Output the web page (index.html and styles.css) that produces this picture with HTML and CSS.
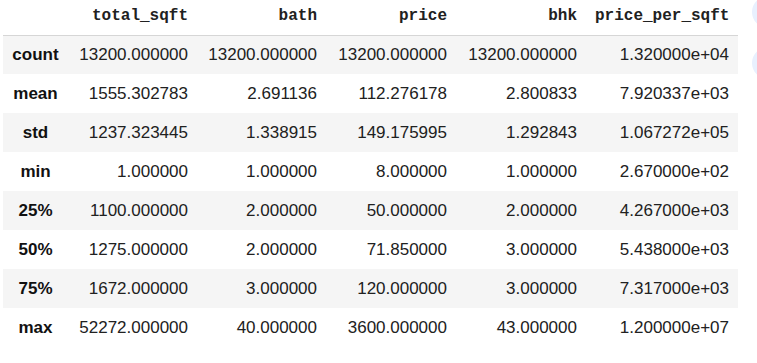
FILE: index.html
```html
<!DOCTYPE html>
<html lang="en">
<head>
    <meta charset="UTF-8">
    <title>df.describe()</title>
    <link rel="stylesheet" href="styles.css">
</head>
<body>
    <div class="output">
        <table class="dataframe">
            <colgroup>
                <col class="c-index">
                <col class="c-num">
                <col class="c-num">
                <col class="c-num2">
                <col class="c-num2">
                <col class="c-last">
            </colgroup>
            <thead>
                <tr>
                    <th></th>
                    <th>total_sqft</th>
                    <th>bath</th>
                    <th>price</th>
                    <th>bhk</th>
                    <th>price_per_sqft</th>
                </tr>
            </thead>
            <tbody>
                <tr><th>count</th><td>13200.000000</td><td>13200.000000</td><td>13200.000000</td><td>13200.000000</td><td>1.320000e+04</td></tr>
                <tr><th>mean</th><td>1555.302783</td><td>2.691136</td><td>112.276178</td><td>2.800833</td><td>7.920337e+03</td></tr>
                <tr><th>std</th><td>1237.323445</td><td>1.338915</td><td>149.175995</td><td>1.292843</td><td>1.067272e+05</td></tr>
                <tr><th>min</th><td>1.000000</td><td>1.000000</td><td>8.000000</td><td>1.000000</td><td>2.670000e+02</td></tr>
                <tr><th>25%</th><td>1100.000000</td><td>2.000000</td><td>50.000000</td><td>2.000000</td><td>4.267000e+03</td></tr>
                <tr><th>50%</th><td>1275.000000</td><td>2.000000</td><td>71.850000</td><td>3.000000</td><td>5.438000e+03</td></tr>
                <tr><th>75%</th><td>1672.000000</td><td>3.000000</td><td>120.000000</td><td>3.000000</td><td>7.317000e+03</td></tr>
                <tr><th>max</th><td>52272.000000</td><td>40.000000</td><td>3600.000000</td><td>43.000000</td><td>1.200000e+07</td></tr>
            </tbody>
        </table>
        <button class="round-btn btn-top"></button>
        <button class="round-btn btn-second"></button>
    </div>
</body>
</html>
```

FILE: styles.css
```css
* {
    margin: 0;
    padding: 0;
    box-sizing: border-box;
}

body {
    font-family: 'Liberation Sans', Arial, sans-serif;
    background: #FFFFFF;
    color: #212121;
    overflow: hidden;
}

.output {
    position: relative;
    padding-left: 3px;
}

/* Dataframe table */
.dataframe {
    border-collapse: collapse;
    table-layout: fixed;
    width: 735px;
    font-size: 17px;
}

.c-index { width: 65px; }
.c-num { width: 129px; }
.c-num2 { width: 130px; }
.c-last { width: 152px; }

.dataframe th,
.dataframe td {
    padding: 0 9px;
    text-align: right;
    white-space: nowrap;
}

.dataframe thead th {
    font-family: 'Liberation Mono', 'DejaVu Sans Mono', monospace;
    font-weight: 700;
    font-size: 16px;
    color: #212121;
    height: 35px;
    border-bottom: 1px solid #D6D6D6;
    padding-bottom: 2px;
}

.dataframe tbody th {
    text-align: center;
    font-weight: 700;
    color: #111111;
}

.dataframe tbody tr {
    height: 39px;
}

.dataframe tbody tr:nth-child(odd) {
    background: #F5F5F5;
}

/* Colab side buttons */
.round-btn {
    position: absolute;
    left: 752px;
    width: 32px;
    height: 32px;
    border: none;
    border-radius: 50%;
    background: #E8F0FE;
}

.btn-top {
    top: -4px;
}

.btn-second {
    top: 47px;
}
```
